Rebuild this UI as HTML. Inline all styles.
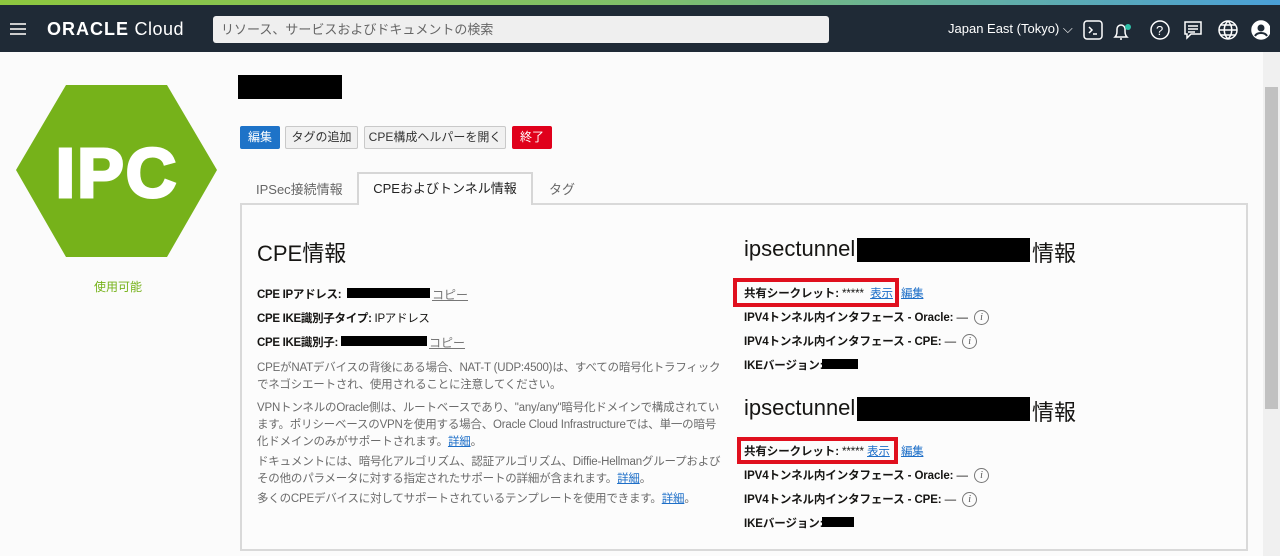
<!DOCTYPE html>
<html><head><meta charset="utf-8">
<style>
*{margin:0;padding:0;box-sizing:border-box}
body{width:1280px;height:556px;overflow:hidden;background:#fbfbfb;font-family:"Liberation Sans","Noto Sans CJK JP",sans-serif;position:relative;color:#161513}
.a{position:absolute;white-space:nowrap}
.top{position:absolute;left:0;top:0;width:1280px;height:52px;background:#1f2a36}
.grad{position:absolute;left:0;top:0;width:1280px;height:5px;background:linear-gradient(90deg,#8dc63f,#7fbf6a 50%,#4aa0d8)}
.btn{position:absolute;top:126px;height:23px;border:1px solid #c9c9c9;border-radius:2px;background:#f1f1f1;font-size:12px;line-height:21px;text-align:center;color:#333}
.lbl{font-size:11.5px;font-weight:bold;color:#161513;letter-spacing:-0.3px}
.r{letter-spacing:-0.1px}
.lbl span{font-weight:normal}
.p{position:absolute;left:257px;width:468px;font-size:11.5px;line-height:17px;color:#6b6b6b;letter-spacing:-0.2px}
a{color:#1e6fc8;text-decoration:underline}
.red{position:absolute;background:#000}
.info{display:inline-block;width:15px;height:15px;border:1px solid #777;border-radius:50%;font-size:10px;line-height:13px;text-align:center;font-style:italic;font-family:"Liberation Serif",serif;color:#555;vertical-align:middle;font-weight:normal;letter-spacing:0;margin-left:3px}
.rb{position:absolute;border:4px solid #e0101e}
.h{position:absolute;font-size:22px;white-space:nowrap;color:#161513}
</style></head><body>
<div class="top"><div class="grad"></div></div>
<div class="a" style="left:10px;top:23px;width:16px;height:2px;background:#ccc;box-shadow:0 5px 0 #ccc,0 10px 0 #ccc"></div>
<div class="a" style="left:47px;top:19px;color:#fff;font-size:18px;letter-spacing:0.5px"><b style="letter-spacing:1px">ORACLE</b> Cloud</div>
<div class="a" style="left:213px;top:16px;width:616px;height:27px;background:#efefef;border-radius:3px;font-size:13px;line-height:27px;padding-left:8px;color:#666">リソース、サービスおよびドキュメントの検索</div>
<div class="a" style="left:948px;top:21px;color:#fff;font-size:13px">Japan East (Tokyo) ⌵</div>
<svg class="a" style="left:1080px;top:17px" width="190" height="26" viewBox="0 0 190 26" fill="none" stroke="#fff" stroke-width="1.5">
<rect x="4" y="4" width="18" height="18" rx="3"/><path d="M9 10l3 3-3 3M13 17h4"/>
<path d="M47 20h-12c2-2 2-4 2-8a4 4 0 0 1 8 0c0 4 0 6 2 8zM40 22h2"/><circle cx="48" cy="10" r="3" fill="#2fc0a8" stroke="none"/>
<circle cx="80" cy="13" r="9"/><text x="76" y="18" fill="#fff" stroke="none" font-size="13" font-family="Liberation Sans">?</text>
<path d="M105 5h16v12h-10l-4 4v-4h-2zM108 9h10M108 12h10M108 15h7"/>
<circle cx="148" cy="13" r="9"/><path d="M139 13h18M148 4c-5 5-5 13 0 18M148 4c5 5 5 13 0 18M141 8h14M141 18h14"/>
<circle cx="181" cy="13" r="9" fill="#fff"/><circle cx="181" cy="11" r="3.5" fill="#1f2a36" stroke="none"/><path d="M175 19c2-4 10-4 12 0" stroke="#1f2a36" stroke-width="2"/>
</svg>
<div class="a" style="left:1263px;top:52px;width:17px;height:504px;background:#f0f0f0"></div>
<div class="a" style="left:1265px;top:87px;width:13px;height:322px;background:#c1c1c1"></div>
<svg class="a" style="left:0;top:60px" width="240" height="240"><polygon points="66,25 167,25 217,110 167,197 66,197 16,110" fill="#76b21a"/><text x="117" y="137" text-anchor="middle" fill="#fff" stroke="#fff" stroke-width="3" font-size="70" font-weight="bold" font-family="Liberation Sans" letter-spacing="2">IPC</text></svg>
<div class="a" style="left:94px;top:278px;font-size:12px;color:#76b21a">使用可能</div>
<div class="red" style="left:238px;top:75px;width:104px;height:24px"></div>
<div class="btn" style="left:240px;width:40px;background:#1e73c8;border-color:#1e73c8;color:#fff">編集</div>
<div class="btn" style="left:285px;width:73px">タグの追加</div>
<div class="btn" style="left:364px;width:142px">CPE構成ヘルパーを開く</div>
<div class="btn" style="left:512px;width:40px;background:#e0001b;border-color:#e0001b;color:#fff">終了</div>
<div class="a" style="left:240px;top:203px;width:1008px;height:348px;border:2px solid #d9d9d9;background:#fcfcfc"></div>
<div class="a" style="left:357px;top:172px;width:176px;height:33px;border:2px solid #d6d6d6;border-bottom:none;background:#fcfcfc;font-size:13px;line-height:29px;text-align:center;color:#222">CPEおよびトンネル情報</div>
<div class="a" style="left:256px;top:179px;font-size:13px;color:#666">IPSec接続情報</div>
<div class="a" style="left:549px;top:179px;font-size:13px;color:#666">タグ</div>
<div class="h" style="left:257px;top:236px">CPE情報</div>
<div class="a lbl" style="left:257px;top:286px">CPE IPアドレス:</div>
<div class="red" style="left:347px;top:288px;width:83px;height:10px"></div>
<div class="a" style="left:432px;top:286px;font-size:12px"><a style="color:#777">コピー</a></div>
<div class="a lbl" style="left:257px;top:310px">CPE IKE識別子タイプ: <span>IPアドレス</span></div>
<div class="a lbl" style="left:257px;top:334px">CPE IKE識別子:</div>
<div class="red" style="left:341px;top:336px;width:86px;height:10px"></div>
<div class="a" style="left:429px;top:334px;font-size:12px"><a style="color:#777">コピー</a></div>
<div class="p" style="top:360px">CPEがNATデバイスの背後にある場合、NAT-T (UDP:4500)は、すべての暗号化トラフィックでネゴシエートされ、使用されることに注意してください。</div>
<div class="p" style="top:400px">VPNトンネルのOracle側は、ルートベースであり、"any/any"暗号化ドメインで構成されています。ポリシーベースのVPNを使用する場合、Oracle Cloud Infrastructureでは、単一の暗号化ドメインのみがサポートされます。<a>詳細</a>。</div>
<div class="p" style="top:454px">ドキュメントには、暗号化アルゴリズム、認証アルゴリズム、Diffie-Hellmanグループおよびその他のパラメータに対する指定されたサポートの詳細が含まれます。<a>詳細</a>。</div>
<div class="p" style="top:491px">多くのCPEデバイスに対してサポートされているテンプレートを使用できます。<a>詳細</a>。</div>

<div class="h" style="left:744px;top:236px">ipsectunnel</div>
<div class="red" style="left:857px;top:238px;width:173px;height:24px"></div>
<div class="h" style="left:1032px;top:236px">情報</div>
<div class="rb" style="left:733px;top:278px;width:166px;height:29px"></div>
<div class="a lbl r" style="left:744px;top:285px">共有シークレット: <span>*****</span> &nbsp;<a style="font-weight:normal">表示</a></div>
<div class="a lbl" style="left:901px;top:285px"><a style="font-weight:normal">編集</a></div>
<div class="a lbl r" style="left:744px;top:309px">IPV4トンネル内インタフェース - Oracle: <span>—</span> <i class="info">i</i></div>
<div class="a lbl r" style="left:744px;top:333px">IPV4トンネル内インタフェース - CPE: <span>—</span> <i class="info">i</i></div>
<div class="a lbl r" style="left:744px;top:357px">IKEバージョン:</div>
<div class="red" style="left:822px;top:359px;width:36px;height:10px"></div>

<div class="h" style="left:744px;top:395px">ipsectunnel</div>
<div class="red" style="left:857px;top:397px;width:173px;height:24px"></div>
<div class="h" style="left:1032px;top:395px">情報</div>
<div class="rb" style="left:737px;top:437px;width:161px;height:27px"></div>
<div class="a lbl r" style="left:744px;top:443px">共有シークレット: <span>*****</span> <a style="font-weight:normal">表示</a></div>
<div class="a lbl" style="left:901px;top:443px"><a style="font-weight:normal">編集</a></div>
<div class="a lbl r" style="left:744px;top:467px">IPV4トンネル内インタフェース - Oracle: <span>—</span> <i class="info">i</i></div>
<div class="a lbl r" style="left:744px;top:491px">IPV4トンネル内インタフェース - CPE: <span>—</span> <i class="info">i</i></div>
<div class="a lbl r" style="left:744px;top:515px">IKEバージョン:</div>
<div class="red" style="left:822px;top:517px;width:32px;height:10px"></div>
</body></html>
